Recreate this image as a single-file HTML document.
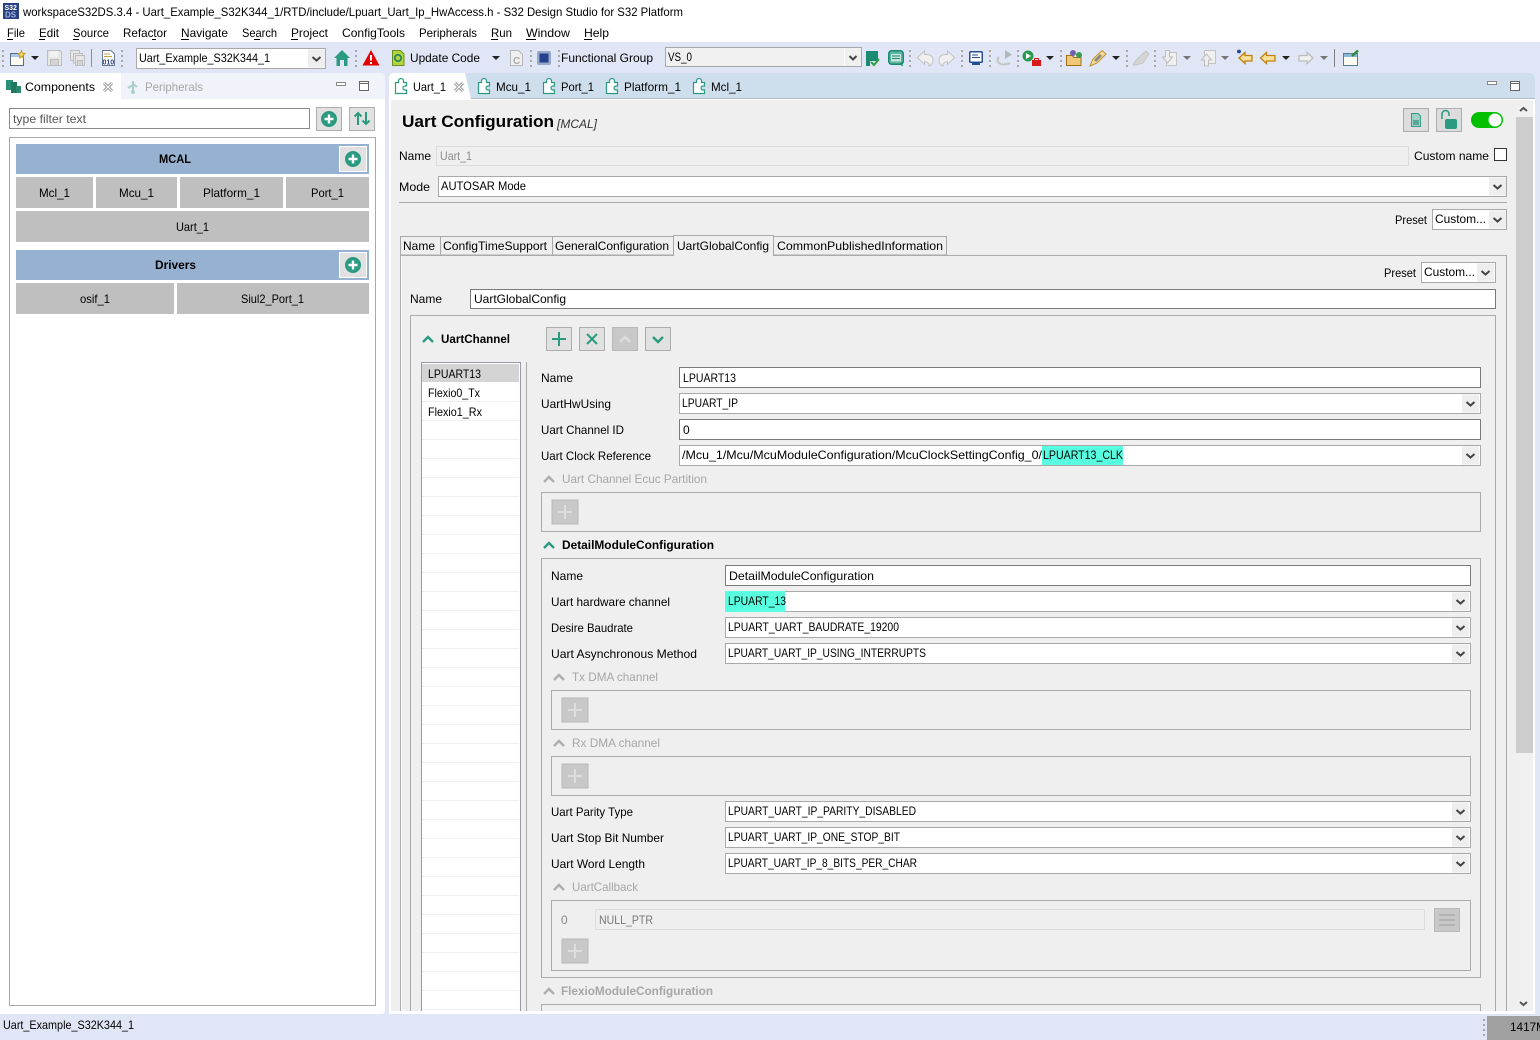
<!DOCTYPE html>
<html><head><meta charset="utf-8"><title>S32 Design Studio</title>
<style>
html,body{margin:0;padding:0;width:1540px;height:1040px;overflow:hidden;background:#e0e6f5}
svg{display:block}
text{font-family:"Liberation Sans",sans-serif;font-size:12px;fill:#000}
.g{fill:#a6a6a6}.b{font-weight:bold}
.f{fill:#fff;stroke:#7a7a7a}.c{fill:#fff;stroke:#a9a9a9}.bx{fill:none;stroke:#ababab}
.bt{fill:#e1e1e1;stroke:#adadad}.bd{fill:#c8c8c8;stroke:#b8b8b8}
.cell{fill:#bfbfbf}.bar{fill:#97b2d1}
</style></head><body>
<svg width="1540" height="1040" viewBox="0 0 1540 1040" xmlns="http://www.w3.org/2000/svg">
<defs>
<g id="dn"><rect x="-8" y="-9" width="17" height="18" fill="#eee"/><path d="M-3.500-1.500 0.500 2 4.500-1.500" fill="none" stroke="#444" stroke-width="2"/></g>
<path id="cht" d="M-5 3 0-2 5 3" fill="none" stroke="#2a9a80" stroke-width="2.400"/>
<path id="chg" d="M-5 3 0-2 5 3" fill="none" stroke="#aeaeae" stroke-width="2.400"/>
<g id="pb"><circle r="8" fill="#2a9a80"/><path d="M-4.500 0H4.500M0-4.500V4.500" stroke="#fff" stroke-width="2.400" fill="none"/></g>
<g id="pz" fill="#fff" stroke="#2a9a80" stroke-width="1.200"><path d="M-5.500-2.500H-2.500V-4A2.500 2.500 0 0 1 2.500-4V-2.500H5.500V1H4A2 2 0 0 0 4 5H5.500V8.500H-5.500Z"/></g>
<g id="dp"><rect x="-13" y="-12" width="26" height="24" class="bd"/><path d="M-7 0H7M0-7V7" stroke="#dedede" stroke-width="2" fill="none"/></g>
<path id="tri" d="M-4-2H4L0 2Z" fill="#222"/>
<path id="trg" d="M-4-2H4L0 2Z" fill="#777"/>
<g id="gr" fill="#a8a8a8"><rect x="0" y="-8" width="2" height="2"/><rect x="0" y="-3" width="2" height="2"/><rect x="0" y="2" width="2" height="2"/><rect x="0" y="7" width="2" height="2"/></g>
<g id="x"><path d="M-4-4 4 4M-4 4 4-4" stroke="#888" stroke-width="3" fill="none"/><path d="M-4-4 4 4M-4 4 4-4" stroke="#fff" stroke-width="1.200" fill="none"/></g>
</defs>

<!-- title + menu -->
<rect width="1540" height="42" fill="#fff"/>
<rect x="3" y="3" width="16" height="16" fill="#29407f"/>
<text x="4.500" y="10" style="font-size:7px;fill:#fff" class="b">S32</text><text x="5" y="17.500" style="font-size:8px;fill:#9fb4e0" class="b">DS</text>
<text x="23" y="16" textLength="660" lengthAdjust="spacingAndGlyphs">workspaceS32DS.3.4 - Uart_Example_S32K344_1/RTD/include/Lpuart_Uart_Ip_HwAccess.h - S32 Design Studio for S32 Platform</text>
<text x="7" y="37" textLength="18" lengthAdjust="spacingAndGlyphs">File</text>
<text x="39" y="37" textLength="20" lengthAdjust="spacingAndGlyphs">Edit</text>
<text x="73" y="37" textLength="36" lengthAdjust="spacingAndGlyphs">Source</text>
<text x="123" y="37" textLength="44" lengthAdjust="spacingAndGlyphs">Refactor</text>
<text x="181" y="37" textLength="47" lengthAdjust="spacingAndGlyphs">Navigate</text>
<text x="242" y="37" textLength="35" lengthAdjust="spacingAndGlyphs">Search</text>
<text x="291" y="37" textLength="37" lengthAdjust="spacingAndGlyphs">Project</text>
<text x="342" y="37" textLength="63" lengthAdjust="spacingAndGlyphs">ConfigTools</text>
<text x="419" y="37" textLength="58" lengthAdjust="spacingAndGlyphs">Peripherals</text>
<text x="491" y="37" textLength="21" lengthAdjust="spacingAndGlyphs">Run</text>
<text x="526" y="37" textLength="44" lengthAdjust="spacingAndGlyphs">Window</text>
<text x="584" y="37" textLength="25" lengthAdjust="spacingAndGlyphs">Help</text>
<path d="M7 39.500h6M39 39.500h6M73 39.500h6M152 39.500h4M181 39.500h8M254 39.500h6M291 39.500h7M491 39.500h7M526 39.500h10M584 39.500h8" stroke="#000" fill="none"/>

<!-- toolbar -->
<rect y="42" width="1540" height="32" fill="#e0e6f5"/>
<use href="#gr" x="2" y="58"/>
<rect x="10.500" y="53.500" width="13" height="12" fill="#fdfbf0" stroke="#5a6a80"/><rect x="11" y="54" width="12" height="3" fill="#a8c8e8"/><path d="M21.500 50.500 22.500 53 25 53.500 23 55.500 23.500 58 21.500 56.500 19.500 58 20 55.500 18 53.500 20.500 53Z" fill="#f8d860" stroke="#b89020" stroke-width=".8"/>
<use href="#tri" x="35" y="58"/>
<path d="M47.500 50.500H60L61.500 52V65.500H47.500Z" fill="#e6e6e6" stroke="#bdbdbd"/><rect x="50" y="51" width="8" height="6" fill="#f2f2f2"/><rect x="50.500" y="59.500" width="8" height="6" fill="#d4d4d4" stroke="#bdbdbd"/>
<path d="M70.500 50.500H79.500V60.500H70.500Z" fill="#e6e6e6" stroke="#bdbdbd"/><path d="M73.500 53.500H82.500V63H73.500Z" fill="#e6e6e6" stroke="#bdbdbd"/><path d="M75.500 55.500H84.500V65.500H75.500Z" fill="#e6e6e6" stroke="#bdbdbd"/><rect x="77.500" y="60.500" width="5" height="5" fill="#d4d4d4" stroke="#bdbdbd"/>
<path d="M91.500 49V67" stroke="#909090"/>
<path d="M102.500 50.500H111L114.500 54V65.500H102.500Z" fill="#fff" stroke="#6a7a90"/><path d="M104 54h6M104 56.500h8" stroke="#c8a040"/><text x="102.500" y="64.500" style="font-size:7px;fill:#29407f" class="b">010</text>
<use href="#gr" x="121" y="58"/>
<rect x="136.500" y="48.500" width="189" height="20" class="c"/><text x="139" y="62" textLength="131" lengthAdjust="spacingAndGlyphs">Uart_Example_S32K344_1</text><use href="#dn" x="316" y="58.500"/>
<path d="M342 50 334 58H336.500V66H340V60H344V66H347.500V58H350Z" fill="#2a9a80"/>
<use href="#gr" x="355" y="58"/>
<path d="M371 50 379.500 65.500H362.500Z" fill="#e30000"/><path d="M371 55V60.500M371 62V64" stroke="#fff" stroke-width="2"/>
<path d="M392.500 50.500H400.500L404 54V65.500H392.500Z" fill="#b4d43c" stroke="#6a9020"/><circle cx="398" cy="58" r="3.200" fill="none" stroke="#2a8a5a" stroke-width="1.800"/>
<text x="410" y="62" textLength="70" lengthAdjust="spacingAndGlyphs">Update Code</text>
<use href="#tri" x="496" y="58"/>
<path d="M510.500 50.500H518.500L522.500 54.500V65.500H510.500Z" fill="#f0f0f0" stroke="#b5b5b5"/><text x="513" y="64" style="font-size:10px;fill:#aaa" class="b">C</text>
<use href="#gr" x="530" y="58"/>
<rect x="537" y="51" width="14" height="14" rx="2" fill="#9aa8c8"/><rect x="539.500" y="53.500" width="9" height="9" fill="#23418f"/>
<use href="#gr" x="558" y="58"/>
<text x="561" y="62" textLength="92" lengthAdjust="spacingAndGlyphs">Functional Group</text>
<rect x="665.500" y="47.500" width="196" height="19" fill="#f0f0f0" stroke="#a9a9a9"/><text x="668" y="61" textLength="24" lengthAdjust="spacingAndGlyphs">VS_0</text><rect x="844" y="48" width="1" height="18" fill="#fff"/><path d="M849.500 56 853 59.500 856.500 56" fill="none" stroke="#444" stroke-width="2"/>
<path d="M866 51H878V61H870V66H866Z" fill="#1a8a70"/><path d="M871 62 874 65 879 59" stroke="#2aa040" stroke-width="2" fill="none"/>
<rect x="888.750" y="50.750" width="14.500" height="13.500" rx="3" fill="#5ab8a0" stroke="#1a8a70" stroke-width="1.500"/><rect x="891" y="54" width="10" height="7.500" fill="#c8e4dc"/><path d="M892 56h8M892 58.500h8" stroke="#1a8a70"/><path d="M899 64 903 66.500 902 62Z" fill="#1a8a70"/>
<use href="#gr" x="909" y="58"/>
<path id="ur" d="M917.500 57.500 924.500 51V54.500H927Q933 55 933 60.500Q933 64.500 929 66Q929 62 925 61.500H924.500V64.500Z" fill="#f0f0f0" stroke="#c4c4c4"/><path d="M954.500 57.500 947.500 51V54.500H945Q939 55 939 60.500Q939 64.500 943 66Q943 62 947 61.500H947.500V64.500Z" fill="#f0f0f0" stroke="#c4c4c4"/>
<use href="#gr" x="961" y="58"/>
<rect x="969.750" y="51.750" width="12.500" height="10.500" rx="1" fill="#fff" stroke="#23518f" stroke-width="1.500"/><path d="M972 55h6M972 57.500h8" stroke="#23518f"/><rect x="972" y="63" width="8" height="2" fill="#23518f"/>
<use href="#gr" x="989" y="58"/>
<path d="M1005 50V59L1012 54.500Z" fill="#b0b8b8"/><path d="M999 57Q996 60 999 63Q1003 66 1010 63" fill="none" stroke="#c4c4c4" stroke-width="2"/>
<use href="#gr" x="1017" y="58"/>
<circle cx="1028" cy="56" r="5.500" fill="#2a9a50"/><path d="M1026 53V59L1031 56Z" fill="#fff"/><rect x="1032" y="60" width="9" height="6" fill="#d81818"/><path d="M1034.500 60V58.500H1038.500V60" fill="none" stroke="#d81818"/>
<use href="#tri" x="1050" y="58"/>
<use href="#gr" x="1060" y="58"/>
<path d="M1066.500 55.500H1072L1074 57.500H1081V65.500H1066.500Z" fill="#f0c878" stroke="#a07010"/><circle cx="1073" cy="53" r="3" fill="#7060b0"/><circle cx="1079" cy="55" r="3" fill="#3a9a50"/>
<path d="M1090 66 1093 59 1102 50.500 1106 54 1097 63Z" fill="#f4dc98" stroke="#c09030"/><path d="M1094 60 1100 54 1102 56 1096 62Z" fill="#8a8a80"/>
<use href="#tri" x="1116" y="58"/>
<use href="#gr" x="1126" y="58"/>
<path d="M1133 65 1137 59 1146 51 1149 54 1143 63 1136 65Z" fill="#d4d4d4" stroke="#c4c4c4"/>
<use href="#gr" x="1154" y="58"/>
<rect x="1166.500" y="52.500" width="10" height="13" fill="#f0f0f0" stroke="#c4c4c4"/><path d="M1165.500 50.500H1169.500V57H1172.500L1167.500 63 1162.500 57H1165.500Z" fill="#eee" stroke="#bdbdbd"/>
<use href="#trg" x="1187" y="58"/>
<rect x="1204.500" y="50.500" width="11" height="13" fill="#f0f0f0" stroke="#c4c4c4"/><path d="M1204.500 66H1208.500V60H1211.500L1206.500 54 1201.500 60H1204.500Z" fill="#eee" stroke="#bdbdbd"/>
<use href="#trg" x="1225" y="58"/>
<path d="M1239 58 1245 52.500V55.500H1252V61H1245V63.500Z" fill="#f8e098" stroke="#c08010" stroke-width="1.300"/><path d="M1237 51.500h4M1239 49.500v4M1237.500 50l3 3M1240.500 50l-3 3" stroke="#23418f" stroke-width="1"/>
<path d="M1260.500 58 1266.500 52.500V55.500H1275V61H1266.500V63.500Z" fill="#f8e098" stroke="#c08010" stroke-width="1.300"/>
<use href="#tri" x="1286" y="58"/>
<path d="M1313 58 1307 52.500V55.500H1299V61H1307V63.500Z" fill="#f0f0f0" stroke="#bdbdbd" stroke-width="1.300"/>
<use href="#trg" x="1324" y="58"/>
<path d="M1334.500 49V67" stroke="#808080"/>
<rect x="1343.500" y="53.500" width="14" height="12" fill="#fdfbf0" stroke="#5a7a90"/><rect x="1344" y="54" width="13" height="3" fill="#8ab8d8"/><path d="M1352 56 1358 50.500" stroke="#2a8a3a" stroke-width="2.500"/>

<!-- left panel -->
<path d="M0 73H380Q385 73 385 78V1010Q385 1014 381 1014H0Z" fill="#fff"/>
<path d="M121 73H380Q385 73 385 78V99H121Z" fill="#f0f3f9"/>
<rect x="6" y="80" width="7" height="10" fill="#2a9078"/><rect x="11" y="82" width="6" height="11" fill="#1f7a60"/><rect x="16" y="86" width="5" height="7" fill="#2a8a70"/>
<text x="25" y="91" textLength="70" lengthAdjust="spacingAndGlyphs">Components</text><use href="#x" x="108" y="87"/>
<path d="M133 81V92M133 85 128 88M133 84 137 87" stroke="#a8d0c8" stroke-width="2" fill="none"/><circle cx="133" cy="92" r="2" fill="#a8d0c8"/>
<text x="145" y="91" textLength="58" lengthAdjust="spacingAndGlyphs" class="g">Peripherals</text>
<rect x="336.500" y="82.500" width="9" height="3" fill="#fff" stroke="#888"/><rect x="359.500" y="81.500" width="9" height="9" fill="#fff" stroke="#666"/><path d="M360 83.500h9" stroke="#666"/>
<rect x="9.500" y="108.500" width="300" height="20" class="c" style="stroke:#8a8a8a"/><text x="13" y="123" textLength="73" lengthAdjust="spacingAndGlyphs" style="fill:#555">type filter text</text>
<rect x="316.500" y="107.500" width="25" height="23" class="bt"/><use href="#pb" x="329" y="119"/>
<rect x="349.500" y="107.500" width="25" height="23" class="bt"/><path d="M358 125V113M354.500 116.500 358 113 361.500 116.500M366 112V124M362.500 120.500 366 124 369.500 120.500" fill="none" stroke="#2a9a80" stroke-width="2"/>
<rect x="9.500" y="137.500" width="366" height="868" fill="#fff" stroke="#a9a9a9"/>
<rect x="16" y="144" width="353" height="30" class="bar"/><text x="159" y="163" textLength="32" lengthAdjust="spacingAndGlyphs" class="b">MCAL</text>
<rect x="339.500" y="146.500" width="27" height="25" fill="#e1e1e1" stroke="#fff"/><use href="#pb" x="353" y="159"/>
<rect x="16" y="177" width="77" height="31" class="cell"/><rect x="96" y="177" width="81" height="31" class="cell"/><rect x="180" y="177" width="103" height="31" class="cell"/><rect x="286" y="177" width="83" height="31" class="cell"/>
<text x="39" y="197" textLength="31" lengthAdjust="spacingAndGlyphs">Mcl_1</text><text x="119" y="197" textLength="35" lengthAdjust="spacingAndGlyphs">Mcu_1</text><text x="203" y="197" textLength="57" lengthAdjust="spacingAndGlyphs">Platform_1</text><text x="311" y="197" textLength="33" lengthAdjust="spacingAndGlyphs">Port_1</text>
<rect x="16" y="211" width="353" height="31" class="cell"/><text x="176" y="231" textLength="33" lengthAdjust="spacingAndGlyphs">Uart_1</text>
<rect x="16" y="250" width="353" height="30" class="bar"/><text x="155" y="269" textLength="41" lengthAdjust="spacingAndGlyphs" class="b">Drivers</text>
<rect x="339.500" y="252.500" width="27" height="25" fill="#e1e1e1" stroke="#fff"/><use href="#pb" x="353" y="265"/>
<rect x="16" y="283" width="158" height="31" class="cell"/><rect x="177" y="283" width="192" height="31" class="cell"/>
<text x="80" y="303" textLength="30" lengthAdjust="spacingAndGlyphs">osif_1</text><text x="241" y="303" textLength="63" lengthAdjust="spacingAndGlyphs">Siul2_Port_1</text>

<!-- editor -->
<path d="M389 78Q389 73 394 73H1530Q1535 73 1535 78V1010Q1535 1014 1531 1014H389Z" fill="#fff"/>
<path d="M394 73H1530Q1535 73 1535 78V98.500H389V78Q389 73 394 73Z" fill="#cfdeed"/>
<path d="M389 98.500H1535" stroke="#aebccc"/>
<path d="M389 99V78Q389 73 394 73H465L471 99Z" fill="#fff"/>
<use href="#pz" x="401" y="85"/><text x="413" y="91" textLength="33" lengthAdjust="spacingAndGlyphs">Uart_1</text><use href="#x" x="459" y="87"/>
<use href="#pz" x="484" y="85"/><text x="496" y="91" textLength="35" lengthAdjust="spacingAndGlyphs">Mcu_1</text>
<use href="#pz" x="549" y="85"/><text x="561" y="91" textLength="33" lengthAdjust="spacingAndGlyphs">Port_1</text>
<use href="#pz" x="612" y="85"/><text x="624" y="91" textLength="57" lengthAdjust="spacingAndGlyphs">Platform_1</text>
<use href="#pz" x="699" y="85"/><text x="711" y="91" textLength="31" lengthAdjust="spacingAndGlyphs">Mcl_1</text>
<rect x="1487.500" y="81.500" width="9" height="3" fill="#fff" stroke="#888"/><rect x="1510.500" y="81.500" width="9" height="9" fill="#fff" stroke="#666"/><path d="M1511 83.500h9" stroke="#666"/>

<rect x="391" y="100" width="1125" height="911" fill="#efefef"/>
<rect x="1516" y="100" width="17" height="911" fill="#f0f0f0"/><rect x="1516" y="117" width="17" height="636" fill="#cdcdcd"/>
<path d="M1520 111 1523.500 108 1527 111" fill="none" stroke="#555" stroke-width="2"/><path d="M1520 1002 1523.500 1005 1527 1002" fill="none" stroke="#555" stroke-width="2"/>

<text x="402" y="127" textLength="152" lengthAdjust="spacingAndGlyphs" class="b" style="font-size:17px">Uart Configuration</text>
<text x="557" y="128" textLength="40" lengthAdjust="spacingAndGlyphs" style="font-style:italic;font-size:11.500px;fill:#333">[MCAL]</text>
<rect x="1403.500" y="108.500" width="25" height="23" class="bt" style="fill:#dcdcdc"/><path d="M1411.500 113.500H1418L1420.500 116V126.500H1411.500Z" fill="#9fd0c4" stroke="#3a9a88"/><rect x="1413" y="120" width="6" height="5" fill="#5aa898"/>
<rect x="1436.500" y="108.500" width="25" height="23" class="bt" style="fill:#dcdcdc"/><rect x="1445" y="119" width="12" height="10" rx="2" fill="#2a9a80"/><path d="M1442 119V114A3.500 3.500 0 0 1 1449 114V116" fill="none" stroke="#2a9a80" stroke-width="1.500"/>
<rect x="1471" y="112" width="32" height="16" rx="8" fill="#00c000"/><circle cx="1495" cy="120" r="6.500" fill="#fff"/>
<text x="399" y="160" textLength="32" lengthAdjust="spacingAndGlyphs">Name</text>
<rect x="436.500" y="146.500" width="972" height="19" fill="#efefef" stroke="#dcdcdc"/><text x="440" y="160" textLength="32" lengthAdjust="spacingAndGlyphs" style="fill:#8a8a8a">Uart_1</text>
<text x="1414" y="160" textLength="75" lengthAdjust="spacingAndGlyphs">Custom name</text>
<rect x="1494.500" y="148.500" width="12" height="12" fill="#fff" stroke="#333"/>
<text x="399" y="191" textLength="31" lengthAdjust="spacingAndGlyphs">Mode</text>
<rect x="438.500" y="176.500" width="1068" height="20" class="c"/><text x="441" y="190" textLength="85" lengthAdjust="spacingAndGlyphs">AUTOSAR Mode</text><use href="#dn" x="1497" y="186.500"/>
<path d="M399 202.500H1507" stroke="#ababab"/>
<text x="1395" y="224" textLength="32" lengthAdjust="spacingAndGlyphs">Preset</text>
<rect x="1432.500" y="209.500" width="74" height="20" class="c"/><text x="1435" y="223" textLength="51" lengthAdjust="spacingAndGlyphs">Custom...</text><use href="#dn" x="1497" y="219.500"/>

<!-- tabs -->
<path d="M400.500 1011V255.500H1506.500V1011" fill="none" stroke="#ababab"/>
<path d="M401.500 1011V256.500" stroke="#fff"/>
<rect x="400.500" y="236.500" width="40" height="18.500" fill="#efefef" stroke="#a9a9a9"/>
<rect x="440.500" y="236.500" width="112" height="18.500" fill="#efefef" stroke="#a9a9a9"/>
<rect x="552.500" y="236.500" width="121" height="18.500" fill="#efefef" stroke="#a9a9a9"/>
<rect x="673.500" y="235.500" width="100" height="20" fill="#efefef" stroke="#a9a9a9"/><path d="M674 255.500H773" stroke="#efefef"/>
<rect x="773.500" y="236.500" width="173" height="18.500" fill="#efefef" stroke="#a9a9a9"/>
<text x="403" y="250" textLength="32" lengthAdjust="spacingAndGlyphs">Name</text>
<text x="443" y="250" textLength="104" lengthAdjust="spacingAndGlyphs">ConfigTimeSupport</text>
<text x="555" y="250" textLength="114" lengthAdjust="spacingAndGlyphs">GeneralConfiguration</text>
<text x="677" y="250" textLength="92" lengthAdjust="spacingAndGlyphs">UartGlobalConfig</text>
<text x="777" y="250" textLength="166" lengthAdjust="spacingAndGlyphs">CommonPublishedInformation</text>

<text x="1384" y="277" textLength="32" lengthAdjust="spacingAndGlyphs">Preset</text>
<rect x="1421.500" y="262.500" width="74" height="20" class="c"/><text x="1424" y="276" textLength="51" lengthAdjust="spacingAndGlyphs">Custom...</text><use href="#dn" x="1485" y="272.500"/>
<text x="410" y="303" textLength="32" lengthAdjust="spacingAndGlyphs">Name</text>
<rect x="470.500" y="289.500" width="1025" height="19" class="f"/><text x="474" y="303" textLength="92" lengthAdjust="spacingAndGlyphs">UartGlobalConfig</text>

<path d="M410.500 1011V315.500H1495.500V1011" fill="none" stroke="#ababab"/>
<use href="#cht" x="428" y="339"/><text x="441" y="343" textLength="69" lengthAdjust="spacingAndGlyphs" class="b">UartChannel</text>
<rect x="546.500" y="327.500" width="25" height="23" class="bt"/><path d="M552 339H566M559 332V346" stroke="#2a9a80" stroke-width="2" fill="none"/>
<rect x="579.500" y="327.500" width="25" height="23" class="bt"/><path d="M587 334 597 344M597 334 587 344" stroke="#2a9a80" stroke-width="2" fill="none"/>
<rect x="612.500" y="327.500" width="25" height="23" class="bd"/><path d="M620 342 625 337 630 342" fill="none" stroke="#dedede" stroke-width="2.400"/>
<rect x="645.500" y="327.500" width="25" height="23" class="bt"/><path d="M653 337 658 342 663 337" fill="none" stroke="#2a9a80" stroke-width="2.400"/>

<rect x="421" y="362" width="100" height="650" fill="#fff"/>
<path d="M421.500 1011V362.500H520.500V1011" fill="none" stroke="#9a9aa6"/>
<rect x="422" y="364" width="97" height="18" fill="#d4d4d4"/>
<path d="M422 401.500H519M422 420.500H519M422 439.500H519M422 458.500H519M422 477.500H519M422 496.500H519M422 515.500H519M422 534.500H519M422 553.500H519M422 572.500H519M422 591.500H519M422 610.500H519M422 629.500H519M422 648.500H519M422 667.500H519M422 686.500H519M422 705.500H519M422 724.500H519M422 743.500H519M422 762.500H519M422 781.500H519M422 800.500H519M422 819.500H519M422 838.500H519M422 857.500H519M422 876.500H519M422 895.500H519M422 914.500H519M422 933.500H519M422 952.500H519M422 971.500H519M422 990.500H519M422 1009.500H519" stroke="#efefef"/>
<text x="428" y="378" textLength="53" lengthAdjust="spacingAndGlyphs">LPUART13</text>
<text x="428" y="397" textLength="52" lengthAdjust="spacingAndGlyphs">Flexio0_Tx</text>
<text x="428" y="416" textLength="54" lengthAdjust="spacingAndGlyphs">Flexio1_Rx</text>
<path d="M526.500 362V1011" stroke="#a9a9a9"/>

<text x="541" y="382" textLength="32" lengthAdjust="spacingAndGlyphs">Name</text>
<rect x="679.500" y="367.500" width="801" height="20" class="f"/><text x="683" y="382" textLength="53" lengthAdjust="spacingAndGlyphs">LPUART13</text>
<text x="541" y="408" textLength="70" lengthAdjust="spacingAndGlyphs">UartHwUsing</text>
<rect x="679.500" y="393.500" width="801" height="20" class="c"/><text x="682" y="407" textLength="56" lengthAdjust="spacingAndGlyphs">LPUART_IP</text><use href="#dn" x="1470" y="403.500"/>
<text x="541" y="434" textLength="83" lengthAdjust="spacingAndGlyphs">Uart Channel ID</text>
<rect x="679.500" y="419.500" width="801" height="20" class="f"/><text x="683" y="434">0</text>
<text x="541" y="460" textLength="110" lengthAdjust="spacingAndGlyphs">Uart Clock Reference</text>
<rect x="679.500" y="445.500" width="801" height="20" class="c"/><rect x="1042" y="446" width="81" height="19" fill="#57ffe0"/>
<text x="682" y="459" textLength="360" lengthAdjust="spacingAndGlyphs">/Mcu_1/Mcu/McuModuleConfiguration/McuClockSettingConfig_0/</text><text x="1043" y="459" textLength="80" lengthAdjust="spacingAndGlyphs">LPUART13_CLK</text><use href="#dn" x="1470" y="455.500"/>
<use href="#chg" x="549" y="479"/><text x="562" y="483" textLength="145" lengthAdjust="spacingAndGlyphs" class="g">Uart Channel Ecuc Partition</text>
<rect x="541.500" y="492.500" width="939" height="39" class="bx"/><use href="#dp" x="565" y="512"/>
<use href="#cht" x="549" y="545"/><text x="562" y="549" textLength="152" lengthAdjust="spacingAndGlyphs" class="b">DetailModuleConfiguration</text>
<rect x="541.500" y="558.500" width="939" height="419" class="bx"/>

<text x="551" y="580" textLength="32" lengthAdjust="spacingAndGlyphs">Name</text>
<rect x="725.500" y="565.500" width="745" height="20" class="f"/><text x="729" y="580" textLength="145" lengthAdjust="spacingAndGlyphs">DetailModuleConfiguration</text>
<text x="551" y="606" textLength="119" lengthAdjust="spacingAndGlyphs">Uart hardware channel</text>
<rect x="725.500" y="591.500" width="745" height="20" class="c"/><rect x="725" y="591" width="60" height="21" fill="#57ffe0"/><text x="728" y="605" textLength="58" lengthAdjust="spacingAndGlyphs">LPUART_13</text><use href="#dn" x="1460" y="601.500"/>
<text x="551" y="632" textLength="82" lengthAdjust="spacingAndGlyphs">Desire Baudrate</text>
<rect x="725.500" y="617.500" width="745" height="20" class="c"/><text x="728" y="631" textLength="171" lengthAdjust="spacingAndGlyphs">LPUART_UART_BAUDRATE_19200</text><use href="#dn" x="1460" y="627.500"/>
<text x="551" y="658" textLength="146" lengthAdjust="spacingAndGlyphs">Uart Asynchronous Method</text>
<rect x="725.500" y="643.500" width="745" height="20" class="c"/><text x="728" y="657" textLength="198" lengthAdjust="spacingAndGlyphs">LPUART_UART_IP_USING_INTERRUPTS</text><use href="#dn" x="1460" y="653.500"/>
<use href="#chg" x="559" y="677"/><text x="572" y="681" textLength="86" lengthAdjust="spacingAndGlyphs" class="g">Tx DMA channel</text>
<rect x="551.500" y="690.500" width="919" height="39" class="bx"/><use href="#dp" x="575" y="710"/>
<use href="#chg" x="559" y="743"/><text x="572" y="747" textLength="88" lengthAdjust="spacingAndGlyphs" class="g">Rx DMA channel</text>
<rect x="551.500" y="756.500" width="919" height="39" class="bx"/><use href="#dp" x="575" y="776"/>
<text x="551" y="816" textLength="82" lengthAdjust="spacingAndGlyphs">Uart Parity Type</text>
<rect x="725.500" y="801.500" width="745" height="20" class="c"/><text x="728" y="815" textLength="188" lengthAdjust="spacingAndGlyphs">LPUART_UART_IP_PARITY_DISABLED</text><use href="#dn" x="1460" y="811.500"/>
<text x="551" y="842" textLength="113" lengthAdjust="spacingAndGlyphs">Uart Stop Bit Number</text>
<rect x="725.500" y="827.500" width="745" height="20" class="c"/><text x="728" y="841" textLength="172" lengthAdjust="spacingAndGlyphs">LPUART_UART_IP_ONE_STOP_BIT</text><use href="#dn" x="1460" y="837.500"/>
<text x="551" y="868" textLength="94" lengthAdjust="spacingAndGlyphs">Uart Word Length</text>
<rect x="725.500" y="853.500" width="745" height="20" class="c"/><text x="728" y="867" textLength="189" lengthAdjust="spacingAndGlyphs">LPUART_UART_IP_8_BITS_PER_CHAR</text><use href="#dn" x="1460" y="863.500"/>
<use href="#chg" x="559" y="887"/><text x="572" y="891" textLength="66" lengthAdjust="spacingAndGlyphs" class="g">UartCallback</text>
<rect x="551.500" y="900.500" width="919" height="70" class="bx"/>
<text x="561" y="924" class="g" style="fill:#888">0</text>
<rect x="595.500" y="909.500" width="829" height="20" fill="#efefef" stroke="#dcdcdc"/><text x="599" y="924" textLength="54" lengthAdjust="spacingAndGlyphs" style="fill:#777">NULL_PTR</text>
<rect x="1434.500" y="908.500" width="25" height="23" class="bd"/><path d="M1439 915h16M1439 920h16M1439 925h16" stroke="#aaa" stroke-width="1.500"/>
<use href="#dp" x="575" y="951"/>
<use href="#chg" x="549" y="991"/><text x="561" y="995" textLength="152" lengthAdjust="spacingAndGlyphs" class="b g">FlexioModuleConfiguration</text>
<path d="M541.500 1011V1004.500H1480.500V1011" fill="none" stroke="#ababab"/>
<rect x="391" y="1011" width="1144" height="3" fill="#fff"/>

<!-- status bar -->
<rect y="1014" width="1540" height="26" fill="#e0e6f5"/>
<text x="3" y="1029" textLength="131" lengthAdjust="spacingAndGlyphs">Uart_Example_S32K344_1</text>
<use href="#gr" x="1483" y="1027"/>
<rect x="1487" y="1016" width="53" height="24" fill="#a0a0a0"/>
<text x="1510" y="1031" textLength="36" lengthAdjust="spacingAndGlyphs">1417M</text>
</svg>
</body></html>
